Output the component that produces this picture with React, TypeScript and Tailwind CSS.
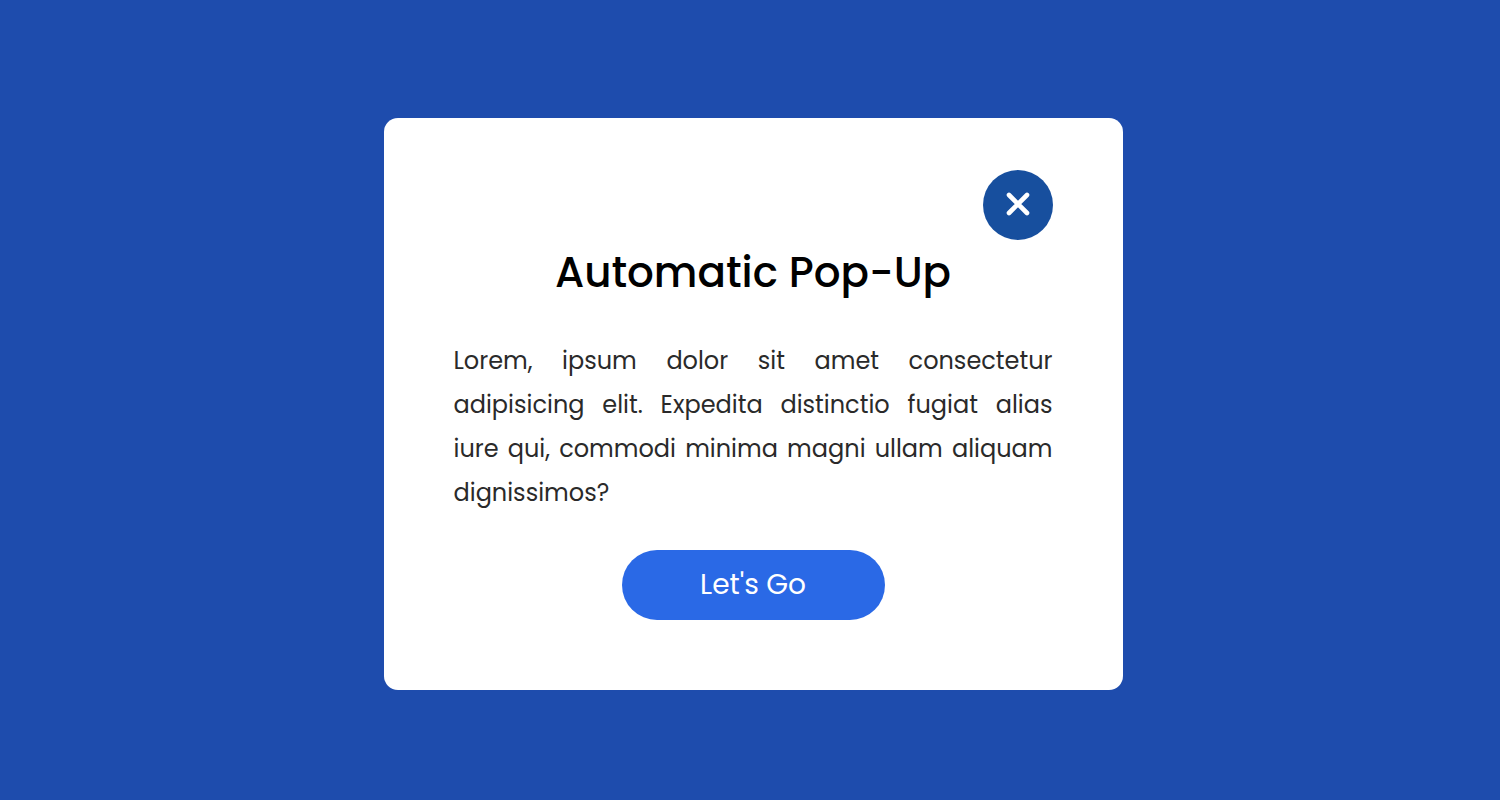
export default function App() {
  return (
    <main className="flex min-h-screen items-center justify-center bg-[#1e4cad] pt-10 pr-4 pb-8 pl-[22px] font-['Poppins','Open_Sans',sans-serif]">
      <section role="dialog" aria-labelledby="popup-title" className="flex w-full max-w-[739px] flex-col items-center rounded-[14px] bg-white px-[70px] pt-[52px] pb-[70px]">
        <button type="button" aria-label="Close" className="flex size-[70px] items-center justify-center self-end rounded-full bg-[#174f9e] pb-0.5 text-white">
          <svg viewBox="0 0 24 24" className="size-6" fill="none" stroke="currentColor" strokeWidth="4.6" strokeLinecap="round" aria-hidden="true">
            <path d="M3 3L21 21M21 3L3 21" />
          </svg>
        </button>
        <h1 id="popup-title" className="text-[42px] leading-[66px] font-medium text-black">Automatic Pop-Up</h1>
        <p className="mt-[33px] text-justify text-[24px] leading-[44px] text-[#2a2a2a]">
          Lorem, ipsum dolor sit amet consectetur adipisicing elit. Expedita distinctio fugiat alias iure&nbsp;qui, commodi minima magni ullam aliquam dignissimos?
        </p>
        <a href="#" className="mt-[35px] flex h-[70px] w-[263px] items-center justify-center rounded-full bg-[#2a69e6] text-[28px] text-white">Let's Go</a>
      </section>
    </main>
  );
}
